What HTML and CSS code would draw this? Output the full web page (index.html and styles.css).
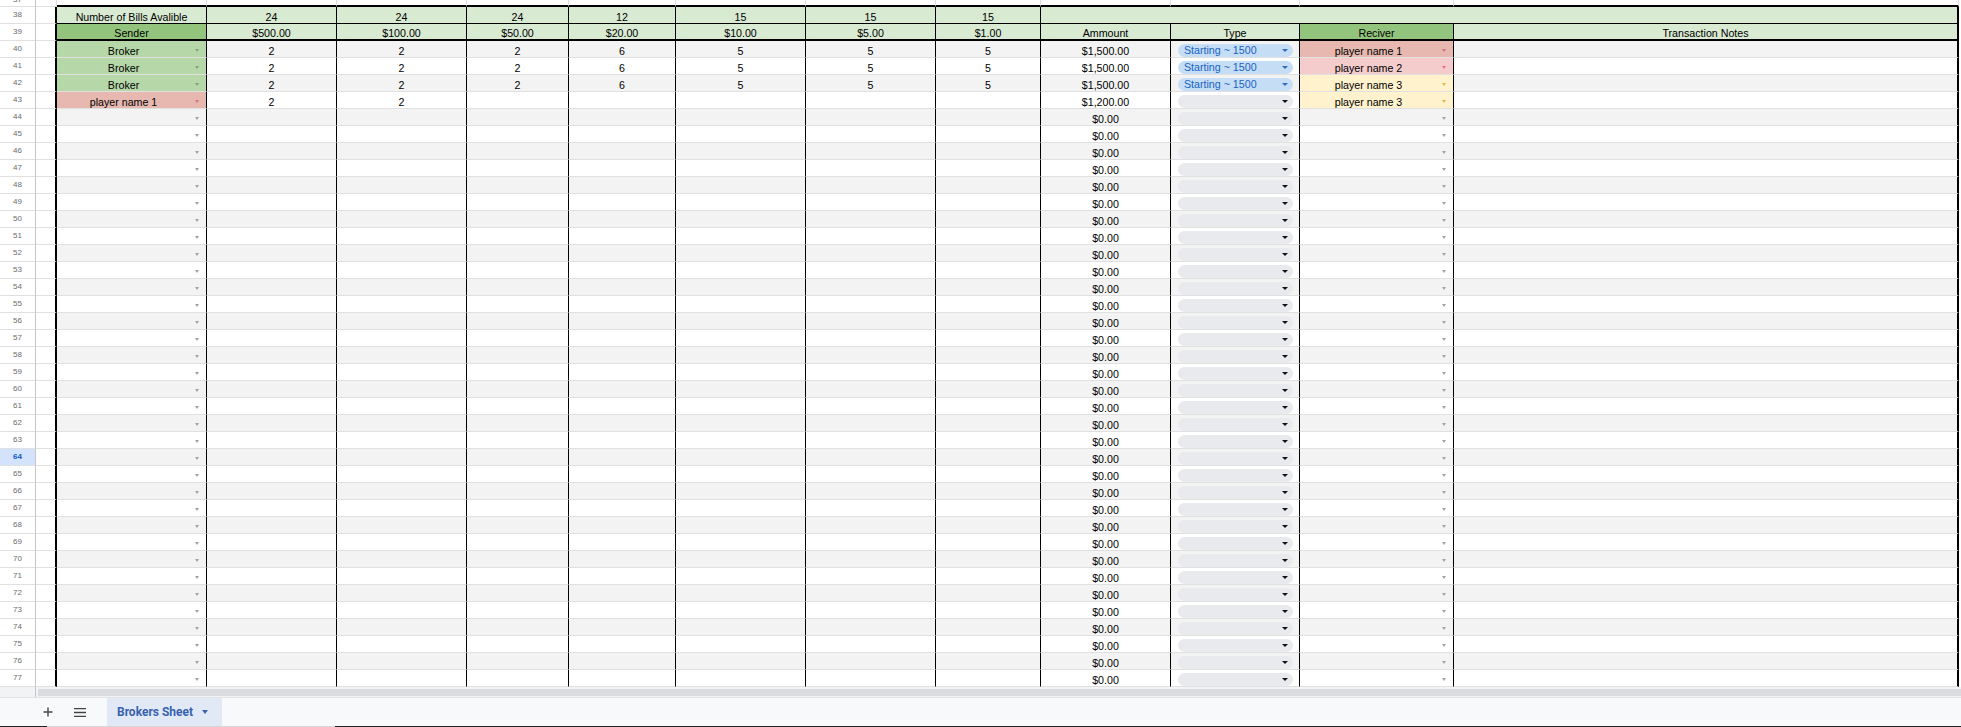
FILE: index.html
```html
<!DOCTYPE html>
<html>
<head>
<meta charset="utf-8">
<title>Brokers Sheet</title>
<link rel="stylesheet" href="styles.css">
</head>
<body>
<div class="sheet">
  <div class="row r37"><div class="h">37</div><div class="a"></div><div></div><div></div><div></div><div></div><div></div><div></div><div></div><div></div><div></div><div></div><div></div><div class="m"></div></div>
  <div class="row r38"><div class="h">38</div><div class="a"></div><div>Number of Bills Avalible</div><div>24</div><div>24</div><div>24</div><div>12</div><div>15</div><div>15</div><div>15</div><div class="m span4"></div></div>
  <div class="row r39"><div class="h">39</div><div class="a"></div><div class="dark">Sender</div><div>$500.00</div><div>$100.00</div><div>$50.00</div><div>$20.00</div><div>$10.00</div><div>$5.00</div><div>$1.00</div><div>Ammount</div><div>Type</div><div class="dark">Reciver</div><div class="m">Transaction Notes</div></div>

  <div class="row band"><div class="h">40</div><div class="a"></div><div class="dd g"><span>Broker</span><i></i></div><div>2</div><div>2</div><div>2</div><div>6</div><div>5</div><div>5</div><div>5</div><div>$1,500.00</div><div class="k"><b class="pill blue"><span>Starting ~ 1500</span><i></i></b></div><div class="dd s1"><span>player name 1</span><i></i></div><div class="m"></div></div>
  <div class="row"><div class="h">41</div><div class="a"></div><div class="dd g"><span>Broker</span><i></i></div><div>2</div><div>2</div><div>2</div><div>6</div><div>5</div><div>5</div><div>5</div><div>$1,500.00</div><div class="k"><b class="pill blue"><span>Starting ~ 1500</span><i></i></b></div><div class="dd s2"><span>player name 2</span><i></i></div><div class="m"></div></div>
  <div class="row band"><div class="h">42</div><div class="a"></div><div class="dd g"><span>Broker</span><i></i></div><div>2</div><div>2</div><div>2</div><div>6</div><div>5</div><div>5</div><div>5</div><div>$1,500.00</div><div class="k"><b class="pill blue"><span>Starting ~ 1500</span><i></i></b></div><div class="dd y"><span>player name 3</span><i></i></div><div class="m"></div></div>
  <div class="row"><div class="h">43</div><div class="a"></div><div class="dd s1"><span>player name 1</span><i></i></div><div>2</div><div>2</div><div></div><div></div><div></div><div></div><div></div><div>$1,200.00</div><div class="k"><b class="pill"><i></i></b></div><div class="dd y"><span>player name 3</span><i></i></div><div class="m"></div></div>

  <div class="row band"><div class="h">44</div><div class="a"></div><div class="dd"><span></span><i></i></div><div></div><div></div><div></div><div></div><div></div><div></div><div></div><div>$0.00</div><div class="k"><b class="pill"><i></i></b></div><div class="dd"><span></span><i></i></div><div class="m"></div></div>
  <div class="row"><div class="h">45</div><div class="a"></div><div class="dd"><span></span><i></i></div><div></div><div></div><div></div><div></div><div></div><div></div><div></div><div>$0.00</div><div class="k"><b class="pill"><i></i></b></div><div class="dd"><span></span><i></i></div><div class="m"></div></div>
  <div class="row band"><div class="h">46</div><div class="a"></div><div class="dd"><span></span><i></i></div><div></div><div></div><div></div><div></div><div></div><div></div><div></div><div>$0.00</div><div class="k"><b class="pill"><i></i></b></div><div class="dd"><span></span><i></i></div><div class="m"></div></div>
  <div class="row"><div class="h">47</div><div class="a"></div><div class="dd"><span></span><i></i></div><div></div><div></div><div></div><div></div><div></div><div></div><div></div><div>$0.00</div><div class="k"><b class="pill"><i></i></b></div><div class="dd"><span></span><i></i></div><div class="m"></div></div>
  <div class="row band"><div class="h">48</div><div class="a"></div><div class="dd"><span></span><i></i></div><div></div><div></div><div></div><div></div><div></div><div></div><div></div><div>$0.00</div><div class="k"><b class="pill"><i></i></b></div><div class="dd"><span></span><i></i></div><div class="m"></div></div>
  <div class="row"><div class="h">49</div><div class="a"></div><div class="dd"><span></span><i></i></div><div></div><div></div><div></div><div></div><div></div><div></div><div></div><div>$0.00</div><div class="k"><b class="pill"><i></i></b></div><div class="dd"><span></span><i></i></div><div class="m"></div></div>
  <div class="row band"><div class="h">50</div><div class="a"></div><div class="dd"><span></span><i></i></div><div></div><div></div><div></div><div></div><div></div><div></div><div></div><div>$0.00</div><div class="k"><b class="pill"><i></i></b></div><div class="dd"><span></span><i></i></div><div class="m"></div></div>
  <div class="row"><div class="h">51</div><div class="a"></div><div class="dd"><span></span><i></i></div><div></div><div></div><div></div><div></div><div></div><div></div><div></div><div>$0.00</div><div class="k"><b class="pill"><i></i></b></div><div class="dd"><span></span><i></i></div><div class="m"></div></div>
  <div class="row band"><div class="h">52</div><div class="a"></div><div class="dd"><span></span><i></i></div><div></div><div></div><div></div><div></div><div></div><div></div><div></div><div>$0.00</div><div class="k"><b class="pill"><i></i></b></div><div class="dd"><span></span><i></i></div><div class="m"></div></div>
  <div class="row"><div class="h">53</div><div class="a"></div><div class="dd"><span></span><i></i></div><div></div><div></div><div></div><div></div><div></div><div></div><div></div><div>$0.00</div><div class="k"><b class="pill"><i></i></b></div><div class="dd"><span></span><i></i></div><div class="m"></div></div>
  <div class="row band"><div class="h">54</div><div class="a"></div><div class="dd"><span></span><i></i></div><div></div><div></div><div></div><div></div><div></div><div></div><div></div><div>$0.00</div><div class="k"><b class="pill"><i></i></b></div><div class="dd"><span></span><i></i></div><div class="m"></div></div>
  <div class="row"><div class="h">55</div><div class="a"></div><div class="dd"><span></span><i></i></div><div></div><div></div><div></div><div></div><div></div><div></div><div></div><div>$0.00</div><div class="k"><b class="pill"><i></i></b></div><div class="dd"><span></span><i></i></div><div class="m"></div></div>
  <div class="row band"><div class="h">56</div><div class="a"></div><div class="dd"><span></span><i></i></div><div></div><div></div><div></div><div></div><div></div><div></div><div></div><div>$0.00</div><div class="k"><b class="pill"><i></i></b></div><div class="dd"><span></span><i></i></div><div class="m"></div></div>
  <div class="row"><div class="h">57</div><div class="a"></div><div class="dd"><span></span><i></i></div><div></div><div></div><div></div><div></div><div></div><div></div><div></div><div>$0.00</div><div class="k"><b class="pill"><i></i></b></div><div class="dd"><span></span><i></i></div><div class="m"></div></div>
  <div class="row band"><div class="h">58</div><div class="a"></div><div class="dd"><span></span><i></i></div><div></div><div></div><div></div><div></div><div></div><div></div><div></div><div>$0.00</div><div class="k"><b class="pill"><i></i></b></div><div class="dd"><span></span><i></i></div><div class="m"></div></div>
  <div class="row"><div class="h">59</div><div class="a"></div><div class="dd"><span></span><i></i></div><div></div><div></div><div></div><div></div><div></div><div></div><div></div><div>$0.00</div><div class="k"><b class="pill"><i></i></b></div><div class="dd"><span></span><i></i></div><div class="m"></div></div>
  <div class="row band"><div class="h">60</div><div class="a"></div><div class="dd"><span></span><i></i></div><div></div><div></div><div></div><div></div><div></div><div></div><div></div><div>$0.00</div><div class="k"><b class="pill"><i></i></b></div><div class="dd"><span></span><i></i></div><div class="m"></div></div>
  <div class="row"><div class="h">61</div><div class="a"></div><div class="dd"><span></span><i></i></div><div></div><div></div><div></div><div></div><div></div><div></div><div></div><div>$0.00</div><div class="k"><b class="pill"><i></i></b></div><div class="dd"><span></span><i></i></div><div class="m"></div></div>
  <div class="row band"><div class="h">62</div><div class="a"></div><div class="dd"><span></span><i></i></div><div></div><div></div><div></div><div></div><div></div><div></div><div></div><div>$0.00</div><div class="k"><b class="pill"><i></i></b></div><div class="dd"><span></span><i></i></div><div class="m"></div></div>
  <div class="row"><div class="h">63</div><div class="a"></div><div class="dd"><span></span><i></i></div><div></div><div></div><div></div><div></div><div></div><div></div><div></div><div>$0.00</div><div class="k"><b class="pill"><i></i></b></div><div class="dd"><span></span><i></i></div><div class="m"></div></div>
  <div class="row band"><div class="h sel">64</div><div class="a"></div><div class="dd"><span></span><i></i></div><div></div><div></div><div></div><div></div><div></div><div></div><div></div><div>$0.00</div><div class="k"><b class="pill"><i></i></b></div><div class="dd"><span></span><i></i></div><div class="m"></div></div>
  <div class="row"><div class="h">65</div><div class="a"></div><div class="dd"><span></span><i></i></div><div></div><div></div><div></div><div></div><div></div><div></div><div></div><div>$0.00</div><div class="k"><b class="pill"><i></i></b></div><div class="dd"><span></span><i></i></div><div class="m"></div></div>
  <div class="row band"><div class="h">66</div><div class="a"></div><div class="dd"><span></span><i></i></div><div></div><div></div><div></div><div></div><div></div><div></div><div></div><div>$0.00</div><div class="k"><b class="pill"><i></i></b></div><div class="dd"><span></span><i></i></div><div class="m"></div></div>
  <div class="row"><div class="h">67</div><div class="a"></div><div class="dd"><span></span><i></i></div><div></div><div></div><div></div><div></div><div></div><div></div><div></div><div>$0.00</div><div class="k"><b class="pill"><i></i></b></div><div class="dd"><span></span><i></i></div><div class="m"></div></div>
  <div class="row band"><div class="h">68</div><div class="a"></div><div class="dd"><span></span><i></i></div><div></div><div></div><div></div><div></div><div></div><div></div><div></div><div>$0.00</div><div class="k"><b class="pill"><i></i></b></div><div class="dd"><span></span><i></i></div><div class="m"></div></div>
  <div class="row"><div class="h">69</div><div class="a"></div><div class="dd"><span></span><i></i></div><div></div><div></div><div></div><div></div><div></div><div></div><div></div><div>$0.00</div><div class="k"><b class="pill"><i></i></b></div><div class="dd"><span></span><i></i></div><div class="m"></div></div>
  <div class="row band"><div class="h">70</div><div class="a"></div><div class="dd"><span></span><i></i></div><div></div><div></div><div></div><div></div><div></div><div></div><div></div><div>$0.00</div><div class="k"><b class="pill"><i></i></b></div><div class="dd"><span></span><i></i></div><div class="m"></div></div>
  <div class="row"><div class="h">71</div><div class="a"></div><div class="dd"><span></span><i></i></div><div></div><div></div><div></div><div></div><div></div><div></div><div></div><div>$0.00</div><div class="k"><b class="pill"><i></i></b></div><div class="dd"><span></span><i></i></div><div class="m"></div></div>
  <div class="row band"><div class="h">72</div><div class="a"></div><div class="dd"><span></span><i></i></div><div></div><div></div><div></div><div></div><div></div><div></div><div></div><div>$0.00</div><div class="k"><b class="pill"><i></i></b></div><div class="dd"><span></span><i></i></div><div class="m"></div></div>
  <div class="row"><div class="h">73</div><div class="a"></div><div class="dd"><span></span><i></i></div><div></div><div></div><div></div><div></div><div></div><div></div><div></div><div>$0.00</div><div class="k"><b class="pill"><i></i></b></div><div class="dd"><span></span><i></i></div><div class="m"></div></div>
  <div class="row band"><div class="h">74</div><div class="a"></div><div class="dd"><span></span><i></i></div><div></div><div></div><div></div><div></div><div></div><div></div><div></div><div>$0.00</div><div class="k"><b class="pill"><i></i></b></div><div class="dd"><span></span><i></i></div><div class="m"></div></div>
  <div class="row"><div class="h">75</div><div class="a"></div><div class="dd"><span></span><i></i></div><div></div><div></div><div></div><div></div><div></div><div></div><div></div><div>$0.00</div><div class="k"><b class="pill"><i></i></b></div><div class="dd"><span></span><i></i></div><div class="m"></div></div>
  <div class="row band"><div class="h">76</div><div class="a"></div><div class="dd"><span></span><i></i></div><div></div><div></div><div></div><div></div><div></div><div></div><div></div><div>$0.00</div><div class="k"><b class="pill"><i></i></b></div><div class="dd"><span></span><i></i></div><div class="m"></div></div>
  <div class="row"><div class="h">77</div><div class="a"></div><div class="dd"><span></span><i></i></div><div></div><div></div><div></div><div></div><div></div><div></div><div></div><div>$0.00</div><div class="k"><b class="pill"><i></i></b></div><div class="dd"><span></span><i></i></div><div class="m"></div></div>
</div>

<div class="hscroll"><div class="corner"></div><div class="track"><div class="thumb"></div></div></div>

<div class="tabs">
  <div class="btn">
    <svg width="10" height="10" viewBox="0 0 10 10"><path d="M5 0.5v9M0.5 5h9" stroke="#444746" stroke-width="1.4" fill="none"/></svg>
  </div>
  <div class="btn menu">
    <svg width="12" height="9" viewBox="0 0 12 9"><path d="M0 0.7h12M0 4.5h12M0 8.3h12" stroke="#444746" stroke-width="1.3" fill="none"/></svg>
  </div>
  <div class="tab"><span>Brokers Sheet</span><i></i></div>
</div>
<div class="edge"><div class="e1"></div><div class="e2"></div><div class="e3"></div></div>
</body>
</html>
```
FILE: styles.css
```css
* { box-sizing: border-box; }
html, body { margin: 0; padding: 0; }
body {
  width: 1961px;
  height: 727px;
  overflow: hidden;
  background: #fff;
  color: #000;
  font-family: "Liberation Sans", Arial, sans-serif;
  font-size: 10.67px;
  display: flex;
  flex-direction: column;
}

.sheet { margin-top: -10px; flex: none; }

.row {
  display: grid;
  grid-template-columns: 36px 21px 150px 130px 130px 102px 107px 130px 130px 105px 130px 129px 154px 505px;
  height: 17px;
}
.row > div {
  border-right: 1px solid #000;
  border-bottom: 1px solid #e0e0e0;
  display: flex;
  align-items: flex-end;
  justify-content: center;
  line-height: 12px;
  white-space: nowrap;
  overflow: hidden;
}
.row > .h {
  border-right: 1px solid #c4c7c5;
  align-items: center;
  font-size: 8px;
  color: #6b6b6b;
  background: #fff;
}
.row > .a { border-right: 2px solid #000; }
.row > .m { border-right: 2px solid #000; }
.row > .span4 { grid-column: span 4; }

.band > div { background: #f3f3f3; }
.band > .h, .band > .a { background: #fff; }

.r37 > div { border-right-color: #e0e0e0; border-bottom: 2px solid #000; }
.r37 > .h, .r37 > .a { border-bottom: 1px solid #e0e0e0; }
.r37 > .a, .r37 > .m { border-right: 1px solid #e0e0e0; }
.r37 > .h { align-items: flex-end; }

.r38 > div { background: #d9ead3; border-bottom-color: #000; }
.r39 > div { background: #d9ead3; border-bottom: 2px solid #000; }
.r38 > .h, .r38 > .a, .r39 > .h, .r39 > .a { background: #fff; border-bottom: 1px solid #e0e0e0; }
.row > .dark { background: #93c47d; }

.row > .sel { background: #d3e3fd; color: #0b57d0; font-weight: bold; }

/* dropdown cells */
.row > .dd { justify-content: flex-start; padding-right: 7px; }
.dd span { flex: 1; text-align: center; overflow: hidden; }
.dd i {
  display: block;
  width: 0;
  height: 0;
  border-left: 2.5px solid transparent;
  border-right: 2.5px solid transparent;
  border-top: 3px solid #a3a3a3;
  margin-left: 5px;
  align-self: center;
  margin-top: 2px;
}
.row > .g { background: #b6d7a8; }
.g i { border-top-color: #86a678; }
.row > .s1 { background: #e6b8af; }
.s1 i { border-top-color: #d9727a; }
.row > .s2 { background: #f4cccc; }
.s2 i { border-top-color: #e57382; }
.row > .y { background: #fff2cc; }
.y i { border-top-color: #e0b548; }

/* chip dropdown */
.row > .k { justify-content: stretch; padding: 0 6px 0 7px; }
.pill {
  flex: 1;
  height: 13px;
  border-radius: 7px;
  background: #e8eaed;
  display: flex;
  align-items: center;
  padding: 0 5px 0 6px;
  font-weight: normal;
  line-height: 13px;
}
.pill i {
  display: block;
  width: 0;
  height: 0;
  margin-left: auto;
  border-left: 3px solid transparent;
  border-right: 3px solid transparent;
  border-top: 3.5px solid #111;
}
.pill.blue { background: #c6def5; color: #1662c4; }
.pill.blue i { border-top-color: #2c6dc2; }

/* horizontal scrollbar */
.hscroll { height: 10px; display: flex; flex: none; }
.hscroll .corner { width: 36px; background: #f1f3f4; border-right: 1px solid #c4c7c5; }
.hscroll .track { flex: 1; padding: 2px 0 1px 2px; background: #f1f3f4; }
.hscroll .thumb { height: 7px; background: #dadce0; }

/* sheet tabs */
.tabs {
  height: 29px;
  flex: none;
  display: flex;
  align-items: stretch;
  padding-left: 40px;
  background: #f8f9fa;
  border-top: 1px solid #e3e3e3;
}
.btn { width: 16px; display: flex; align-items: center; justify-content: center; }
.btn.menu { margin-left: 16px; }
.tab {
  margin-left: 19px;
  width: 115px;
  background: #e1e9f7;
  display: flex;
  align-items: center;
  padding-left: 10px;
  font-family: Roboto, "Liberation Sans", sans-serif;
  font-weight: bold;
  font-size: 12px;
  color: #3862ad;
}
.tab i {
  display: block;
  width: 0;
  height: 0;
  margin-left: 9px;
  border-left: 3.5px solid transparent;
  border-right: 3.5px solid transparent;
  border-top: 4px solid #3862ad;
}

.edge { height: 1px; display: flex; flex: none; }
.edge .e1 { width: 47px; background: #222; }
.edge .e2 { width: 288px; background: #d6d6d6; }
.edge .e3 { flex: 1; background: #222; }
```
